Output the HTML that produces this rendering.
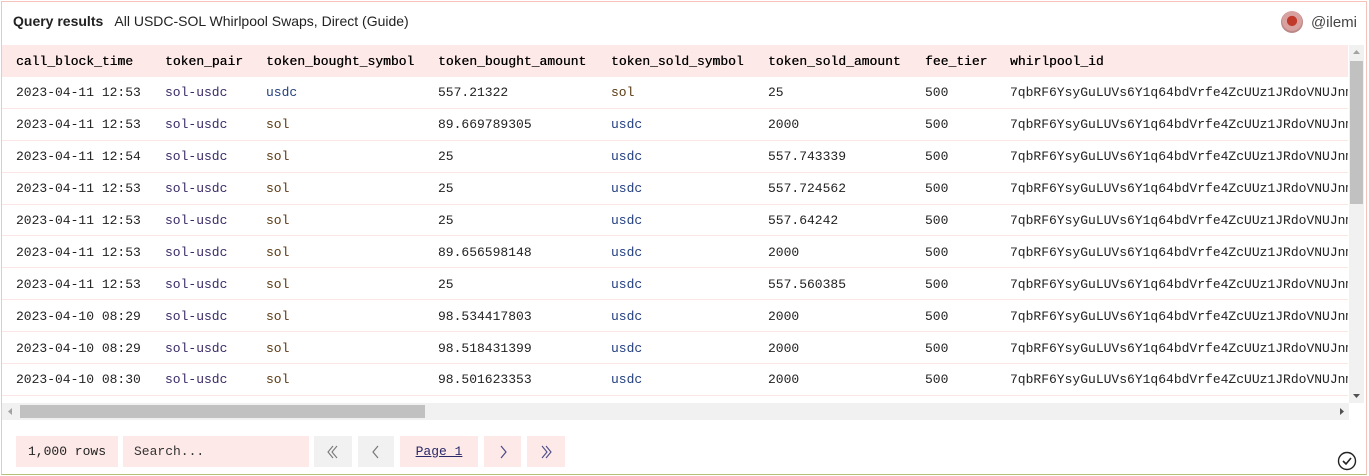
<!DOCTYPE html>
<html><head><style>
*{margin:0;padding:0;box-sizing:border-box}
body{width:1369px;height:476px;background:#fff;font-family:"Liberation Sans",sans-serif;position:relative;overflow:hidden}
.frame{position:absolute;left:1px;top:1px;width:1366px;height:474px;border:1px solid #f6c2b9;border-bottom:1px solid #b5c07a}
.title{position:absolute;left:13px;top:13px;font-size:14px;color:#222}
.title b{font-weight:bold;margin-right:8px}
.user{position:absolute;right:12px;top:11px;font-size:15px;color:#444;display:flex;align-items:center;gap:8px}
.av{width:22px;height:22px;border-radius:50%;background:radial-gradient(circle at 50% 45%,#c0392b 0 30%,#d9a0a0 32% 60%,#b88 62%);}
.tbl{position:absolute;left:2px;top:45px;width:1346px;height:358px;overflow:hidden}
.row{display:flex;height:31.9px;align-items:center;border-bottom:1px solid #fbe6e4;font-family:"Liberation Mono",monospace;font-size:13px;color:#222;white-space:nowrap;padding-top:1px}
.hd{background:#fde9e7;border-bottom:none;height:32px;color:#000;text-shadow:0.3px 0 0 #000}
.row span{display:block;padding-left:14px;overflow:hidden}
.c1{width:149px}.c2{width:101px}.c3{width:172px}.c4{width:173px}.c5{width:157px}.c6{width:157px}.c7{width:85px}.c8{width:352px}
.p{color:#3b2a66}.b{color:#24407e}.s{color:#5a3a12}
.vs{position:absolute;left:1349px;top:45px;width:15px;height:358px;background:#f1f1f1}
.vs .th{position:absolute;left:1px;top:16px;width:13px;height:143px;background:#c1c1c1}
.hs{position:absolute;left:2px;top:403px;width:1347px;height:17px;background:#f1f1f1}
.hs .th{position:absolute;left:18px;top:2px;width:405px;height:13px;background:#c1c1c1}
.ctl{position:absolute;top:436px;height:31px;font-family:"Liberation Mono",monospace;font-size:13px;display:flex;align-items:center;justify-content:center;background:#fde9e7;color:#222}
.g{background:#f1f1f1;color:#666}
</style></head><body>
<div class="frame"></div>
<div class="title"><b>Query results</b> All USDC-SOL Whirlpool Swaps, Direct (Guide)</div>
<div class="user"><div class="av"></div>@ilemi</div>
<div class="tbl">
<div class="row hd"><span class="c1">call_block_time</span><span class="c2">token_pair</span><span class="c3">token_bought_symbol</span><span class="c4">token_bought_amount</span><span class="c5">token_sold_symbol</span><span class="c6">token_sold_amount</span><span class="c7">fee_tier</span><span class="c8">whirlpool_id</span></div>
<div class="row"><span class="c1">2023-04-11 12:53</span><span class="c2 p">sol-usdc</span><span class="c3 b">usdc</span><span class="c4">557.21322</span><span class="c5 s">sol</span><span class="c6">25</span><span class="c7">500</span><span class="c8">7qbRF6YsyGuLUVs6Y1q64bdVrfe4ZcUUz1JRdoVNUJnm</span></div>
<div class="row"><span class="c1">2023-04-11 12:53</span><span class="c2 p">sol-usdc</span><span class="c3 s">sol</span><span class="c4">89.669789305</span><span class="c5 b">usdc</span><span class="c6">2000</span><span class="c7">500</span><span class="c8">7qbRF6YsyGuLUVs6Y1q64bdVrfe4ZcUUz1JRdoVNUJnm</span></div>
<div class="row"><span class="c1">2023-04-11 12:54</span><span class="c2 p">sol-usdc</span><span class="c3 s">sol</span><span class="c4">25</span><span class="c5 b">usdc</span><span class="c6">557.743339</span><span class="c7">500</span><span class="c8">7qbRF6YsyGuLUVs6Y1q64bdVrfe4ZcUUz1JRdoVNUJnm</span></div>
<div class="row"><span class="c1">2023-04-11 12:53</span><span class="c2 p">sol-usdc</span><span class="c3 s">sol</span><span class="c4">25</span><span class="c5 b">usdc</span><span class="c6">557.724562</span><span class="c7">500</span><span class="c8">7qbRF6YsyGuLUVs6Y1q64bdVrfe4ZcUUz1JRdoVNUJnm</span></div>
<div class="row"><span class="c1">2023-04-11 12:53</span><span class="c2 p">sol-usdc</span><span class="c3 s">sol</span><span class="c4">25</span><span class="c5 b">usdc</span><span class="c6">557.64242</span><span class="c7">500</span><span class="c8">7qbRF6YsyGuLUVs6Y1q64bdVrfe4ZcUUz1JRdoVNUJnm</span></div>
<div class="row"><span class="c1">2023-04-11 12:53</span><span class="c2 p">sol-usdc</span><span class="c3 s">sol</span><span class="c4">89.656598148</span><span class="c5 b">usdc</span><span class="c6">2000</span><span class="c7">500</span><span class="c8">7qbRF6YsyGuLUVs6Y1q64bdVrfe4ZcUUz1JRdoVNUJnm</span></div>
<div class="row"><span class="c1">2023-04-11 12:53</span><span class="c2 p">sol-usdc</span><span class="c3 s">sol</span><span class="c4">25</span><span class="c5 b">usdc</span><span class="c6">557.560385</span><span class="c7">500</span><span class="c8">7qbRF6YsyGuLUVs6Y1q64bdVrfe4ZcUUz1JRdoVNUJnm</span></div>
<div class="row"><span class="c1">2023-04-10 08:29</span><span class="c2 p">sol-usdc</span><span class="c3 s">sol</span><span class="c4">98.534417803</span><span class="c5 b">usdc</span><span class="c6">2000</span><span class="c7">500</span><span class="c8">7qbRF6YsyGuLUVs6Y1q64bdVrfe4ZcUUz1JRdoVNUJnm</span></div>
<div class="row"><span class="c1">2023-04-10 08:29</span><span class="c2 p">sol-usdc</span><span class="c3 s">sol</span><span class="c4">98.518431399</span><span class="c5 b">usdc</span><span class="c6">2000</span><span class="c7">500</span><span class="c8">7qbRF6YsyGuLUVs6Y1q64bdVrfe4ZcUUz1JRdoVNUJnm</span></div>
<div class="row"><span class="c1">2023-04-10 08:30</span><span class="c2 p">sol-usdc</span><span class="c3 s">sol</span><span class="c4">98.501623353</span><span class="c5 b">usdc</span><span class="c6">2000</span><span class="c7">500</span><span class="c8">7qbRF6YsyGuLUVs6Y1q64bdVrfe4ZcUUz1JRdoVNUJnm</span></div>
</div>
<div class="vs"><svg width="15" height="15" style="position:absolute;top:0"><path d="M4 9 L7.5 5 L11 9Z" fill="#a3a3a3"/></svg><div class="th"></div><svg width="15" height="15" style="position:absolute;bottom:0"><path d="M4 6 L7.5 10 L11 6Z" fill="#505050"/></svg></div>
<div class="hs"><svg width="15" height="17" style="position:absolute;left:0"><path d="M10 5 L6 8.5 L10 12Z" fill="#a3a3a3"/></svg><div class="th"></div><svg width="15" height="17" style="position:absolute;right:0"><path d="M6 5 L10 8.5 L6 12Z" fill="#505050"/></svg></div>
<div class="ctl" style="left:16px;width:102px">1,000 rows</div>
<div class="ctl" style="left:123px;width:186px;justify-content:flex-start;padding-left:11px;color:#333">Search...</div>
<div class="ctl g" style="left:314px;width:38px"><svg width="14" height="14"><path d="M7 1 L2 7 L7 13 M11 1 L6 7 L11 13" fill="none" stroke="#777" stroke-width="1.1"/></svg></div>
<div class="ctl g" style="left:358px;width:36px"><svg width="10" height="14"><path d="M7 1 L2 7 L7 13" fill="none" stroke="#777" stroke-width="1.2"/></svg></div>
<div class="ctl" style="left:400px;width:78px;text-decoration:underline;color:#2a2a6a">Page 1</div>
<div class="ctl" style="left:484px;width:37px"><svg width="10" height="14"><path d="M3 1 L8 7 L3 13" fill="none" stroke="#4a4a8a" stroke-width="1.2"/></svg></div>
<div class="ctl" style="left:527px;width:38px"><svg width="14" height="14"><path d="M3 1 L8 7 L3 13 M7 1 L12 7 L7 13" fill="none" stroke="#4a4a8a" stroke-width="1.1"/></svg></div>
<svg width="20" height="20" style="position:absolute;left:1337px;top:451px"><circle cx="10" cy="10" r="8.5" fill="none" stroke="#222" stroke-width="1.4"/><path d="M6 10 L9 13 L14 7" fill="none" stroke="#222" stroke-width="1.6"/></svg>
</body></html>
